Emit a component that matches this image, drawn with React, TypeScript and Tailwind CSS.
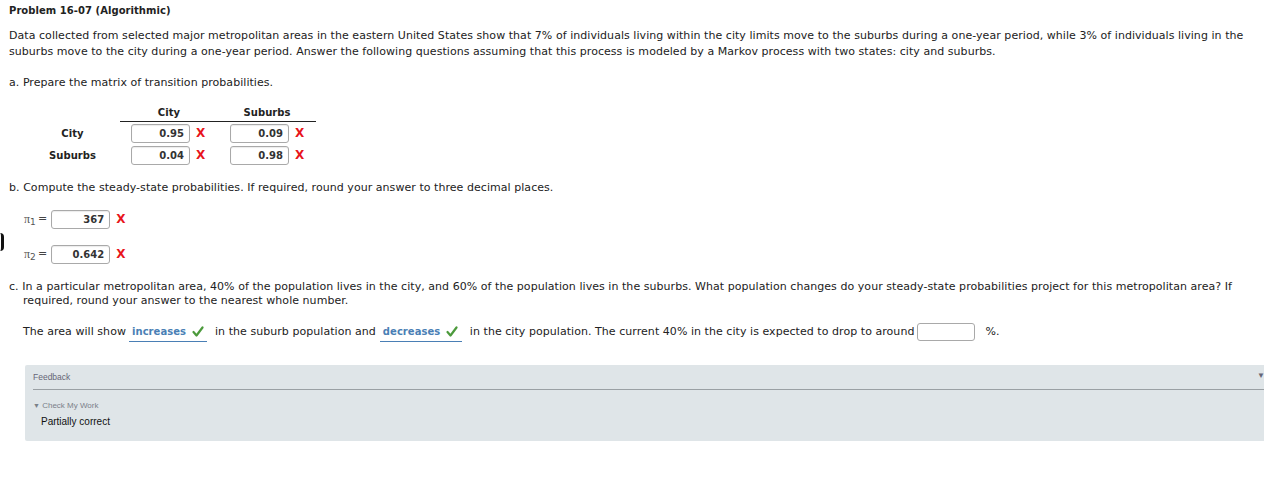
import React from "react";

const X = () => (
  <span className="ml-[6px] text-[12px] font-bold text-[#e8141b] leading-none">X</span>
);

const Check = () => (
  <svg width="12" height="11" viewBox="0 0 12 11" className="ml-[6px] inline-block">
    <path d="M1.5 6 L4.5 9.5 L10.5 1.5" fill="none" stroke="#4c9a3c" strokeWidth="2.2" strokeLinecap="round" strokeLinejoin="round" />
  </svg>
);

const Box = ({ v, w = 59 }: { v: string; w?: number }) => (
  <div
    className="h-[19px] border border-[#a9a9a9] rounded-[3px] bg-white text-right pr-[5px] text-[10px] leading-[17px] font-bold text-[#333] shadow-[inset_0_1px_1px_rgba(0,0,0,0.08)]"
    style={{ width: w }}
  >
    {v}
  </div>
);

export default function App() {
  return (
    <div
      className="relative w-[1264px] h-[495px] overflow-hidden bg-white text-[#222] text-[11px] tracking-[0.05px]"
      style={{ fontFamily: "Verdana, 'DejaVu Sans', sans-serif" }}
    >
      <div className="absolute left-0 top-[233px] w-[4px] h-[18px] border-r-[3px] border-[#111] rounded-r-full" />
      <div className="pl-[9px] pt-[3px]">
        <div className="h-[14px] leading-[15px] font-bold text-[10px] text-[#222] whitespace-nowrap">
          Problem 16-07 (Algorithmic)
        </div>
        <div className="mt-[11px] leading-[16px] whitespace-nowrap">
          <div>
            Data collected from selected major metropolitan areas in the eastern United States show that 7% of individuals living within the city limits move to the suburbs during a one-year period, while 3% of individuals living in the
          </div>
          <div>
            suburbs move to the city during a one-year period. Answer the following questions assuming that this process is modeled by a Markov process with two states: city and suburbs.
          </div>
        </div>
        <div className="mt-[15px] leading-[16px] whitespace-nowrap">a. Prepare the matrix of transition probabilities.</div>

        {/* table */}
        <div className="mt-[13px] ml-[16px]">
          <div className="flex h-[18px]">
            <div className="w-[95px]" />
            <div className="flex w-[196px] border-b-[1.5px] border-[#222] font-bold text-[10px] leading-[18px]">
              <div className="w-[98px] text-center">City</div>
              <div className="w-[98px] text-center">Suburbs</div>
            </div>
          </div>
          {[
            ["City", "0.95", "0.09"],
            ["Suburbs", "0.04", "0.98"],
          ].map((r) => (
            <div key={r[0]} className="flex h-[22px] items-center">
              <div className="w-[95px] text-center font-bold text-[10px] pt-[1px]">{r[0]}</div>
              <div className="w-[98px] pl-[11px] flex items-center">
                <Box v={r[1]} />
                <X />
              </div>
              <div className="w-[98px] pl-[12px] flex items-center">
                <Box v={r[2]} />
                <X />
              </div>
            </div>
          ))}
        </div>

        <div className="mt-[14px] leading-[16px] whitespace-nowrap">
          b. Compute the steady-state probabilities. If required, round your answer to three decimal places.
        </div>
        {[
          ["1", "367", "mt-[12px]"],
          ["2", "0.642", "mt-[13px]"],
        ].map((r) => (
          <div key={r[0]} className={`${r[2]} flex h-[22px] items-center pl-[15px]`}>
            <span className="text-[#555] text-[12px] w-[13px]" style={{ fontFamily: "'Liberation Serif', serif" }}>
              π<sub className="text-[9px]" style={{ fontFamily: "Verdana, 'DejaVu Sans', sans-serif" }}>{r[0]}</sub>
            </span>
            <span className="ml-[1px] mr-[4px] text-[#444]">=</span>
            <Box v={r[1]} />
            <X />
          </div>
        ))}

        <div className="mt-[15px] leading-[14px] whitespace-nowrap">
          <div>
            c. In a particular metropolitan area, 40% of the population lives in the city, and 60% of the population lives in the suburbs. What population changes do your steady-state probabilities project for this metropolitan area? If
          </div>
          <div className="pl-[14px]">required, round your answer to the nearest whole number.</div>
        </div>

        <div className="mt-[13px] flex h-[22px] items-center pl-[14px] whitespace-nowrap">
          <span>The area will show</span>
          <span className="ml-[3px] w-[78px] h-[19px] border-b border-[#4a7fb5] flex items-center pl-[3px]">
            <span className="font-bold text-[10px] text-[#4a7fb5]">increases</span>
            <Check />
          </span>
          <span className="ml-[8px]">in the suburb population and</span>
          <span className="ml-[4px] w-[82px] h-[19px] border-b border-[#4a7fb5] flex items-center pl-[3px]">
            <span className="font-bold text-[10px] text-[#4a7fb5]">decreases</span>
            <Check />
          </span>
          <span className="ml-[8px]">in the city population. The current 40% in the city is expected to drop to around</span>
          <div className="ml-[3px] w-[58px] h-[18px] border border-[#a9a9a9] rounded-[3px] bg-white" />
          <span className="ml-[10px]">%.</span>
        </div>

        <div
          className="relative mt-[22px] ml-[16px] w-[1260px] h-[76px] bg-[#dfe5e8] rounded-[2px] pl-[8px] pt-[6px] tracking-normal"
          style={{ fontFamily: "'Liberation Sans', Arial, sans-serif" }}
        >
          <div className="text-[8.5px] leading-[12px] text-[#667] h-[12px]">Feedback</div>
          <div className="mt-[6px] h-0 border-t border-[#9aa0a4]" />
          <div className="mt-[10px] text-[8px] leading-[12px] text-[#7a8088] h-[12px]">
            <span className="text-[7px]">▼</span> Check My Work
          </div>
          <div className="mt-[3px] ml-[8px] text-[10px] leading-[14px] text-[#111]">Partially correct</div>
          <div className="absolute left-[1232px] top-[5px] text-[8px] text-[#667]">▼</div>
        </div>
      </div>
    </div>
  );
}
